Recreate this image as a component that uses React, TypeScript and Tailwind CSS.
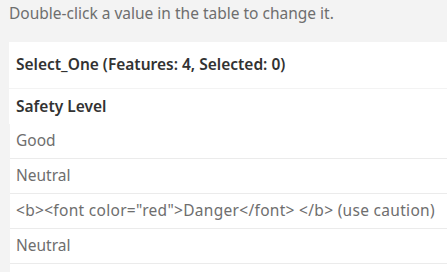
import React from "react";

const rows = [
  { t: "Good", c: "" },
  { t: "Neutral", c: "" },
  { t: '<b><font color="red">Danger</font> </b> (use caution)', c: "tracking-[0.3px]" },
  { t: "Neutral", c: "" },
  { t: "", c: "" },
];

export default function App() {
  return (
    <div
      className="w-full h-[272px] overflow-hidden bg-[#f3f3f3]"
      style={{ fontFamily: '"Noto Sans", "Open Sans", sans-serif' }}
    >
      <div className="h-[27px] pl-[9px] flex items-center text-[15.5px] text-[#6e6e6e]">
        Double-click a value in the table to change it.
      </div>
      <div className="h-[15px]" />
      <div className="ml-[9px] h-[46px] bg-white flex items-center pl-[7px] text-[15.5px] font-semibold text-[#323232]">
        Select_One (Features: 4, Selected: 0)
      </div>
      <div className="h-px" />
      <div className="ml-[9px] h-[35px] bg-white flex items-center pl-[7px] text-[15.5px] font-semibold text-[#323232]">
        Safety Level
      </div>
      {rows.map((r, i) => (
        <div
          key={i}
          className={`ml-[10px] h-[35px] bg-white border-b border-[#ebebeb] flex items-center pl-[6px] text-[15.5px] text-[#6e6e6e] ${r.c}`}
        >
          {r.t}
        </div>
      ))}
    </div>
  );
}
